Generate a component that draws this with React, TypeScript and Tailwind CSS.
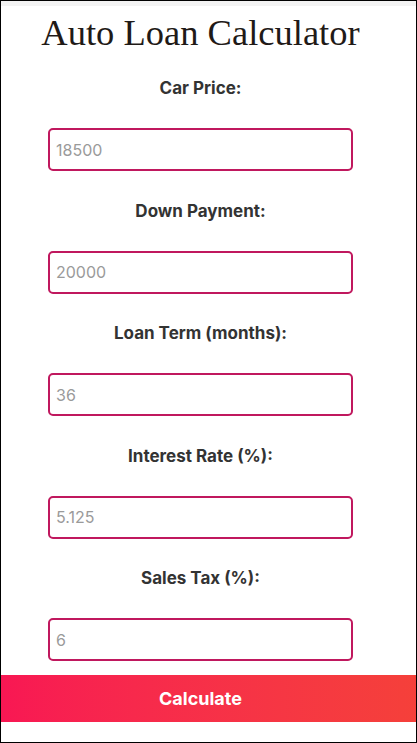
import { useState } from 'react';

const fields = [
  { id: 'price', label: 'Car Price:', placeholder: '18500' },
  { id: 'down', label: 'Down Payment:', placeholder: '20000' },
  { id: 'term', label: 'Loan Term (months):', placeholder: '36' },
  { id: 'rate', label: 'Interest Rate (%):', placeholder: '5.125' },
  { id: 'tax', label: 'Sales Tax (%):', placeholder: '6' },
];

export default function App() {
  const [values, setValues] = useState<Record<string, string>>({});

  return (
    <div className="w-full h-[743px] border border-black bg-white flex flex-col overflow-hidden">
      <div className="h-[5px] bg-[#f3f3f3]" />

      <div className="pr-[16px] flex flex-col items-center">
        <h1 className="mt-[5px] text-[36.5px] leading-[43px] text-[#1f1a17] font-['Liberation_Serif',serif] font-normal">
          Auto Loan Calculator
        </h1>

        <div className="mt-[22px] flex flex-col gap-[27.5px] w-full items-center">
          {fields.map((f) => (
            <div key={f.id} className="flex flex-col items-center w-full">
              <label
                htmlFor={f.id}
                className="h-6 leading-6 text-[17px] font-bold text-[#333] font-['Inter',sans-serif]"
              >
                {f.label}
              </label>
              <input
                id={f.id}
                type="text"
                placeholder={f.placeholder}
                value={values[f.id] ?? ''}
                onChange={(e) => setValues((v) => ({ ...v, [f.id]: e.target.value }))}
                className="mt-7 w-[305px] h-[43px] border-2 border-[#c0185e] rounded-[5px] px-[6px] text-[16px] text-[#333] placeholder:text-[#9a9a9a] font-['Inter',sans-serif] outline-none"
              />
            </div>
          ))}
        </div>
      </div>

      <button className="mt-[14px] h-[47px] w-full pr-[16px] bg-gradient-to-r from-[#f81753] to-[#f5403a] text-white text-[18px] font-bold font-['Inter',sans-serif]">
        Calculate
      </button>
    </div>
  );
}
